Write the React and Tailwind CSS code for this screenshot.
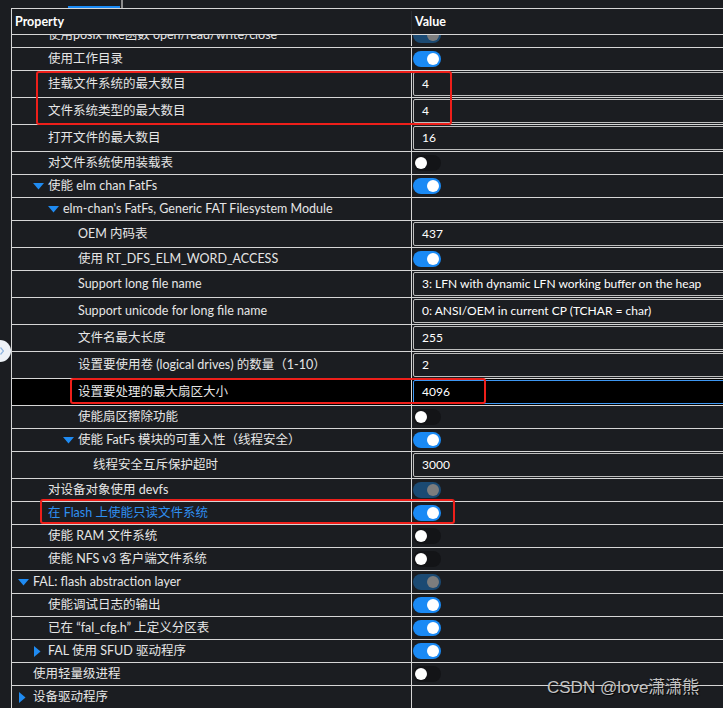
import React from 'react';

const rows = [
  { label: '使用工作目录', lv: 1, v: 'on' },
  { label: '挂载文件系统的最大数目', lv: 1, input: '4' },
  { label: '文件系统类型的最大数目', lv: 1, input: '4' },
  { label: '打开文件的最大数目', lv: 1, input: '16' },
  { label: '对文件系统使用装载表', lv: 1, v: 'off' },
  { label: '使能 elm chan FatFs', lv: 1, arrow: 'down', v: 'on' },
  { label: "elm-chan's FatFs, Generic FAT Filesystem Module", lv: 2, arrow: 'down' },
  { label: 'OEM 内码表', lv: 3, input: '437' },
  { label: '使用 RT_DFS_ELM_WORD_ACCESS', lv: 3, v: 'on' },
  { label: 'Support long file name', lv: 3, input: '3: LFN with dynamic LFN working buffer on the heap' },
  { label: 'Support unicode for long file name', lv: 3, input: '0: ANSI/OEM in current CP (TCHAR = char)' },
  { label: '文件名最大长度', lv: 3, input: '255' },
  { label: '设置要使用卷 (logical drives) 的数量（1-10）', lv: 3, input: '2' },
  { label: '设置要处理的最大扇区大小', lv: 3, input: '4096', selected: true },
  { label: '使能扇区擦除功能', lv: 3, v: 'off' },
  { label: '使能 FatFs 模块的可重入性（线程安全）', lv: 3, arrow: 'down', v: 'on' },
  { label: '线程安全互斥保护超时', lv: 4, input: '3000' },
  { label: '对设备对象使用 devfs', lv: 1, v: 'dis' },
  { label: '在 Flash 上使能只读文件系统', lv: 1, v: 'on', blue: true },
  { label: '使能 RAM 文件系统', lv: 1, v: 'off' },
  { label: '使能 NFS v3 客户端文件系统', lv: 1, v: 'off' },
  { label: 'FAL: flash abstraction layer', lv: 0, arrow: 'down', v: 'dis' },
  { label: '使能调试日志的输出', lv: 1, v: 'on' },
  { label: '已在 “fal_cfg.h” 上定义分区表', lv: 1, v: 'on' },
  { label: 'FAL 使用 SFUD 驱动程序', lv: 1, arrow: 'right', v: 'on' },
  { label: '使用轻量级进程', lv: 0, v: 'off' },
  { label: '设备驱动程序', lv: 0, arrow: 'right' },
];

// left padding of the label cell, by text x minus arrow box
const pads = {
  6: 'pl-[6px]',
  21: 'pl-[21px]',
  36: 'pl-[36px]',
  51: 'pl-[51px]',
  66: 'pl-[66px]',
  81: 'pl-[81px]',
};

const font = { fontFamily: 'Lato, "Noto Sans CJK SC", sans-serif' };

function Arrow({ dir }) {
  if (dir === 'down') {
    return (
      <span className="w-[15px] flex items-center">
        <svg width="11" height="7" viewBox="0 0 11 7">
          <path d="M0 0 L11 0 L5.5 6.5 Z" fill="#1f8bf2" />
        </svg>
      </span>
    );
  }
  return (
    <span className="w-[15px] flex items-center pl-[1px]">
      <svg width="7" height="11" viewBox="0 0 7 11">
        <path d="M0 0 L6.5 5.5 L0 11 Z" fill="#1f8bf2" />
      </svg>
    </span>
  );
}

function Toggle({ s }) {
  const track =
    s === 'on' ? 'bg-[#1a8af5] justify-end' : s === 'dis' ? 'bg-[#1b4a73] justify-end' : 'bg-[#131417] justify-start';
  const knob = s === 'dis' ? 'bg-[#7d7d7d]' : 'bg-white';
  return (
    <div className={`ml-[1px] w-[28px] h-[16px] rounded-full flex items-center px-[2px] ${track}`}>
      <div className={`w-[12px] h-[12px] rounded-full ${knob}`} />
    </div>
  );
}

function Row({ r }) {
  const pl = 21 + 15 * r.lv - (r.arrow ? 15 : 0);
  const h = r.input ? 'h-[27px]' : 'h-[23px]';
  return (
    <div className={`flex border-b border-[#d6d6d6] ${h} ${r.selected ? 'bg-black' : ''}`}>
      <div
        className={`w-[400px] shrink-0 border-r border-[#d6d6d6] flex items-center text-[12.5px] ${pads[pl]} ${
          r.blue ? 'text-[#2f8ff0]' : 'text-[#e6e6e6]'
        }`}
      >
        {r.arrow && <Arrow dir={r.arrow} />}
        <span className="whitespace-nowrap">{r.label}</span>
      </div>
      <div className="flex-1 flex items-center">
        {r.v && <Toggle s={r.v} />}
        {r.input && (
          <div
            className={`ml-[1px] flex-1 h-[24px] rounded-[2px] border flex items-center pl-[8px] text-[12px] text-white whitespace-nowrap ${
              r.selected ? 'border-[#3d97f2] bg-black' : 'border-[#bdbdbd]'
            }`}
          >
            {r.input}
          </div>
        )}
      </div>
    </div>
  );
}

export default function App() {
  return (
    <div className="relative w-[723px] h-[708px] overflow-hidden bg-[#1b1d21]" style={font}>
      {/* tab stub scrolled off the top */}
      <div className="h-[8px] flex">
        <div className="ml-[68px] w-[55px] h-[8px] border-r-2 border-[#8c8c8c] flex items-end">
          <div className="w-[52px] h-[2px] bg-[#1a8af5]" />
        </div>
      </div>

      <div className="ml-[11px] w-[800px] border-l border-t border-[#d6d6d6]">
        <div className="flex h-[26px] border-b border-[#d6d6d6] text-[12.5px] font-bold text-white pt-[2px]">
          <div className="w-[400px] shrink-0 border-r border-[#2a2d32] flex items-center pl-[3px]">Property</div>
          <div className="flex-1 flex items-center pl-[3px]">Value</div>
        </div>

        {/* partly scrolled row */}
        <div className="h-[13px] overflow-hidden border-b border-[#d6d6d6]">
          <div className="flex h-[22px] mt-[-11px]">
            <div className="w-[400px] shrink-0 border-r border-[#d6d6d6] flex items-center pl-[36px] text-[12.5px] text-[#e6e6e6]">
              使用posix-like函数 open/read/write/close
            </div>
            <div className="flex-1 flex items-center">
              <Toggle s="dis" />
            </div>
          </div>
        </div>

        {rows.map((r, i) => (
          <Row key={i} r={r} />
        ))}
      </div>

      {/* annotation boxes */}
      <div className="absolute left-[36px] top-[71px] w-[416px] h-[54px] border-2 border-[#ee1f1a] rounded-[3px]" />
      <div className="absolute left-[70px] top-[378px] w-[416px] h-[26px] border-2 border-[#ee1f1a] rounded-[3px]" />
      <div className="absolute left-[40px] top-[499px] w-[415px] h-[25px] border-2 border-[#ee1f1a] rounded-[3px]" />

      {/* side expander */}
      <div className="absolute left-[-11px] top-[340px] w-[22px] h-[22px] rounded-full bg-[#eef2f7] flex items-center justify-end pr-[7px]">
        <svg width="4" height="8" viewBox="0 0 4 8">
          <path d="M0.5 0.5 L3.5 4 L0.5 7.5" fill="none" stroke="#8fb4de" strokeWidth="1.2" />
        </svg>
      </div>

      <div
        className="absolute left-[547px] top-[675px] text-[17px] text-[#c4c4c4] whitespace-nowrap"
        style={{ textShadow: '1px 1px 1px rgba(0,0,0,0.8)', fontFamily: '"Liberation Sans", "Noto Sans CJK SC", sans-serif' }}
      >
        CSDN @love潇潇熊
      </div>
    </div>
  );
}
